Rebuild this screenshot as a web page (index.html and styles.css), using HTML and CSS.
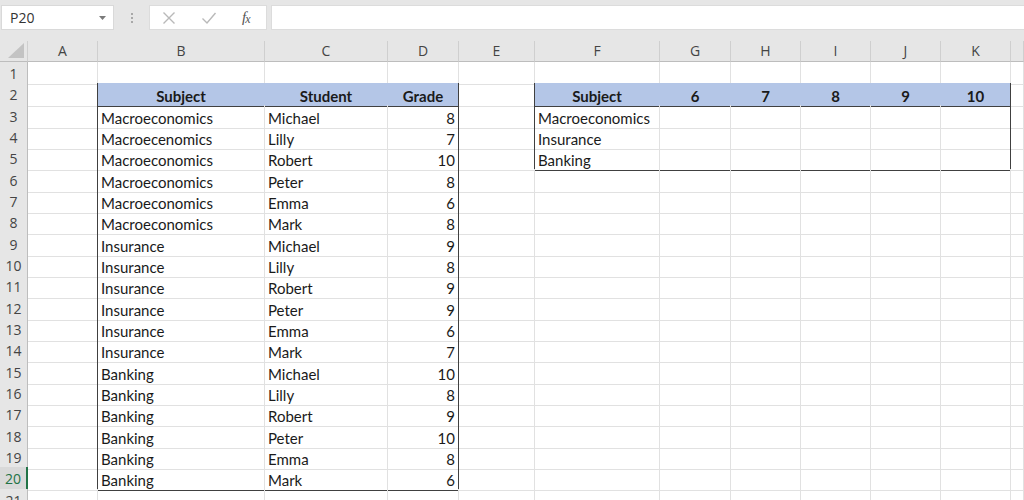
FILE: index.html
```html
<!DOCTYPE html>
<html>
<head>
<meta charset="utf-8">
<title>Sheet</title>
<link rel="stylesheet" href="styles.css">
</head>
<body>
<div class="app">
  <div class="toolbar">
    <div class="namebox"><span>P20</span><svg class="dd" width="7" height="4" viewBox="0 0 7 4"><path d="M0 0h7L3.5 4z"/></svg></div>
    <div class="grip"><i></i><i></i><i></i></div>
    <div class="fxbtns">
      <svg class="ico" width="14" height="14" viewBox="0 0 14 14"><path d="M1.5 1.5l11 11M12.5 1.5l-11 11"/></svg>
      <svg class="ico" width="16" height="14" viewBox="0 0 16 14"><path d="M1.5 7.5l4.5 4.5L14.5 2"/></svg>
      <span class="fx">f<small>x</small></span>
    </div>
    <div class="fxinput"></div>
  </div>
  <div class="sheet">
    <div class="row colhdr"><span class="corner"><svg width="16" height="15" viewBox="0 0 16 15"><path d="M16 0V15H0z"/></svg></span><span>A</span><span>B</span><span>C</span><span>D</span><span>E</span><span>F</span><span>G</span><span>H</span><span>I</span><span>J</span><span>K</span><span></span></div>
    <div class="row"><span class="rh">1</span><span></span><span class="b"></span><span class="b"></span><span class="b"></span><span></span><span class="b"></span><span class="b"></span><span class="b"></span><span class="b"></span><span class="b"></span><span class="b"></span><span></span></div>
    <div class="row"><span class="rh">2</span><span class="r"></span><span class="h b">Subject</span><span class="h b">Student</span><span class="h b r">Grade</span><span class="r"></span><span class="h b">Subject</span><span class="h b">6</span><span class="h b">7</span><span class="h b">8</span><span class="h b">9</span><span class="h b r">10</span><span></span></div>
    <div class="row"><span class="rh">3</span><span class="r"></span><span>Macroeconomics</span><span>Michael</span><span class="n r">8</span><span class="r"></span><span>Macroeconomics</span><span></span><span></span><span></span><span></span><span class="r"></span><span></span></div>
    <div class="row"><span class="rh">4</span><span class="r"></span><span>Macroecenomics</span><span>Lilly</span><span class="n r">7</span><span class="r"></span><span>Insurance</span><span></span><span></span><span></span><span></span><span class="r"></span><span></span></div>
    <div class="row"><span class="rh">5</span><span class="r"></span><span>Macroeconomics</span><span>Robert</span><span class="n r">10</span><span class="r"></span><span class="b">Banking</span><span class="b"></span><span class="b"></span><span class="b"></span><span class="b"></span><span class="b r"></span><span></span></div>
    <div class="row"><span class="rh">6</span><span class="r"></span><span>Macroeconomics</span><span>Peter</span><span class="n r">8</span><span></span><span></span><span></span><span></span><span></span><span></span><span></span><span></span></div>
    <div class="row"><span class="rh">7</span><span class="r"></span><span>Macroeconomics</span><span>Emma</span><span class="n r">6</span><span></span><span></span><span></span><span></span><span></span><span></span><span></span><span></span></div>
    <div class="row"><span class="rh">8</span><span class="r"></span><span>Macroeconomics</span><span>Mark</span><span class="n r">8</span><span></span><span></span><span></span><span></span><span></span><span></span><span></span><span></span></div>
    <div class="row"><span class="rh">9</span><span class="r"></span><span>Insurance</span><span>Michael</span><span class="n r">9</span><span></span><span></span><span></span><span></span><span></span><span></span><span></span><span></span></div>
    <div class="row"><span class="rh">10</span><span class="r"></span><span>Insurance</span><span>Lilly</span><span class="n r">8</span><span></span><span></span><span></span><span></span><span></span><span></span><span></span><span></span></div>
    <div class="row"><span class="rh">11</span><span class="r"></span><span>Insurance</span><span>Robert</span><span class="n r">9</span><span></span><span></span><span></span><span></span><span></span><span></span><span></span><span></span></div>
    <div class="row"><span class="rh">12</span><span class="r"></span><span>Insurance</span><span>Peter</span><span class="n r">9</span><span></span><span></span><span></span><span></span><span></span><span></span><span></span><span></span></div>
    <div class="row"><span class="rh">13</span><span class="r"></span><span>Insurance</span><span>Emma</span><span class="n r">6</span><span></span><span></span><span></span><span></span><span></span><span></span><span></span><span></span></div>
    <div class="row"><span class="rh">14</span><span class="r"></span><span>Insurance</span><span>Mark</span><span class="n r">7</span><span></span><span></span><span></span><span></span><span></span><span></span><span></span><span></span></div>
    <div class="row"><span class="rh">15</span><span class="r"></span><span>Banking</span><span>Michael</span><span class="n r">10</span><span></span><span></span><span></span><span></span><span></span><span></span><span></span><span></span></div>
    <div class="row"><span class="rh">16</span><span class="r"></span><span>Banking</span><span>Lilly</span><span class="n r">8</span><span></span><span></span><span></span><span></span><span></span><span></span><span></span><span></span></div>
    <div class="row"><span class="rh">17</span><span class="r"></span><span>Banking</span><span>Robert</span><span class="n r">9</span><span></span><span></span><span></span><span></span><span></span><span></span><span></span><span></span></div>
    <div class="row"><span class="rh">18</span><span class="r"></span><span>Banking</span><span>Peter</span><span class="n r">10</span><span></span><span></span><span></span><span></span><span></span><span></span><span></span><span></span></div>
    <div class="row"><span class="rh">19</span><span class="r"></span><span>Banking</span><span>Emma</span><span class="n r">8</span><span></span><span></span><span></span><span></span><span></span><span></span><span></span><span></span></div>
    <div class="row"><span class="rh sel">20</span><span class="r"></span><span class="b">Banking</span><span class="b">Mark</span><span class="n r b">6</span><span></span><span></span><span></span><span></span><span></span><span></span><span></span><span></span></div>
    <div class="row"><span class="rh">21</span><span></span><span></span><span></span><span></span><span></span><span></span><span></span><span></span><span></span><span></span><span></span><span></span></div>
  </div>
</div>
</body>
</html>
```

FILE: styles.css
```css
html, body {
  margin: 0;
  padding: 0;
  background: #ffffff;
  overflow: hidden;
}

.app {
  width: 1024px;
  height: 500px;
  overflow: hidden;
  font-family: "Lato", "Liberation Sans", sans-serif;
}

/* ---------- formula bar ---------- */
.toolbar {
  display: flex;
  align-items: flex-start;
  height: 41px;
  padding-top: 5px;
  box-sizing: border-box;
  background: #e6e6e6;
}

.namebox {
  margin-left: 1px;
  width: 113px;
  height: 25px;
  box-sizing: border-box;
  background: #ffffff;
  border: 1px solid #d9d9d9;
  display: flex;
  align-items: center;
  justify-content: space-between;
  padding: 0 7px 0 8px;
  font-family: "Open Sans", "Noto Sans", sans-serif;
  font-size: 14px;
  color: #333333;
}

.dd path { fill: #7a7a7a; }

.grip {
  width: 35px;
  height: 25px;
  display: flex;
  flex-direction: column;
  align-items: center;
  justify-content: center;
  gap: 2px;
}

.grip i {
  display: block;
  width: 2px;
  height: 2px;
  background: #a8a8a8;
}

.fxbtns {
  width: 118px;
  height: 25px;
  box-sizing: border-box;
  background: #ffffff;
  border: 1px solid #dcdcdc;
  display: flex;
  align-items: center;
  padding-left: 12px;
  gap: 25px;
}

.ico path {
  fill: none;
  stroke: #b9b9b9;
  stroke-width: 1.4;
}

.fx {
  font-family: "Liberation Serif", serif;
  font-style: italic;
  font-size: 15px;
  color: #555555;
  letter-spacing: -1px;
}

.fx small {
  font-size: 12px;
  position: relative;
  top: 1px;
}

.fxinput {
  margin-left: 4px;
  flex: 1;
  height: 25px;
  background: #ffffff;
  border: 1px solid #dcdcdc;
  border-right: none;
  box-sizing: border-box;
}

/* ---------- grid ---------- */
.row {
  display: grid;
  grid-template-columns: 28px 70px 167px 123px 71px 76px 125px 71px 70px 70px 70px 70px 1fr;
  height: 21.33px;
}

.row > span {
  box-sizing: border-box;
  border-right: 1px solid #e1e1e1;
  border-bottom: 1px solid #e1e1e1;
  font-size: 15px;
  color: #1a1a1a;
  line-height: 20px;
  padding: 3px 3px 0;
  white-space: nowrap;
  overflow: visible;
}

.colhdr {
  height: 21px;
  background: #e6e6e6;
}

.colhdr > span {
  background: #e6e6e6;
  border-right: 1px solid #cfcfcf;
  border-bottom: 1px solid #bdbdbd;
  text-align: center;
  padding-top: 0;
  font-family: "Open Sans", "Noto Sans", sans-serif;
  font-size: 14px;
  color: #444444;
}

.colhdr > .corner {
  display: flex;
  align-items: flex-end;
  justify-content: flex-end;
  padding: 0 3px 3px 0;
}

.corner path { fill: #c3c3c3; }

.row > .rh {
  background: #e6e6e6;
  border-right: 1px solid #bdbdbd;
  border-bottom: 1px solid #d7d7d7;
  text-align: center;
  padding: 2px 0 0;
  font-family: "Open Sans", "Noto Sans", sans-serif;
  font-size: 14px;
  color: #444444;
}

.row > .rh.sel {
  background: #d9d9d9;
  color: #217346;
  border-right: 2px solid #217346;
}

.row > .h {
  background: #b4c6e7;
  border-right-color: #b4c6e7;
  font-weight: 700;
  text-align: center;
}

.row > .n { text-align: right; }
.row > .r { border-right-color: #404040; }
.row > .b { border-bottom-color: #404040; }
```
